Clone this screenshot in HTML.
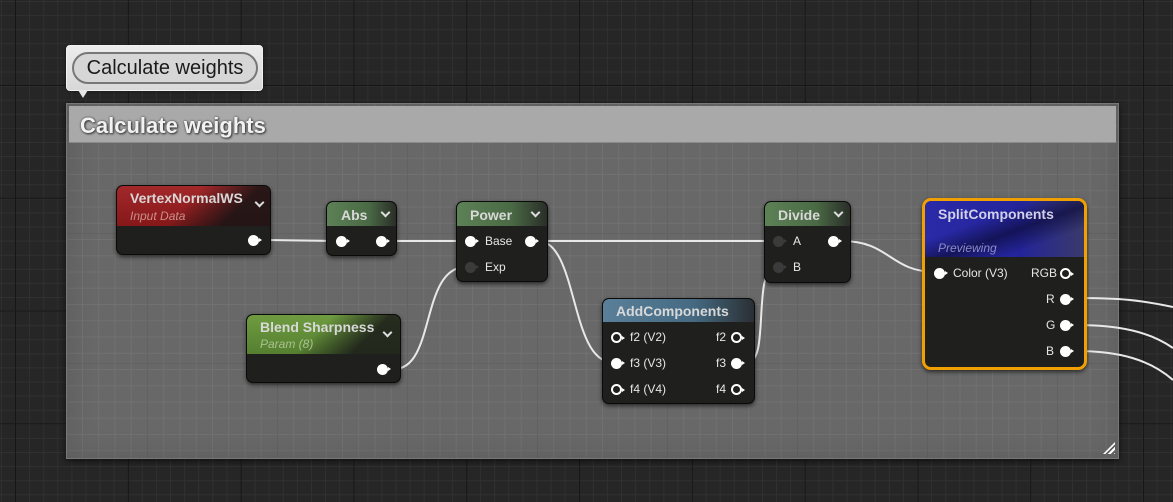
<!DOCTYPE html>
<html><head><meta charset="utf-8"><style>
*{margin:0;padding:0;box-sizing:border-box}
body{width:1173px;height:502px;overflow:hidden;position:relative;font-family:"Liberation Sans",sans-serif;
background-color:#262626;
background-image:
linear-gradient(90deg,#161616 1px,transparent 1px),
linear-gradient(0deg,#161616 1px,transparent 1px),
linear-gradient(90deg,#303030 1px,transparent 1px),
linear-gradient(0deg,#303030 1px,transparent 1px);
background-size:112.8px 112.8px,112.8px 112.8px,14.1px 14.1px,14.1px 14.1px;
background-position:15px 0,0 86px,15px 0,0 2px;}
.comment{position:absolute;left:66px;top:103px;width:1053px;height:356px;background-color:#686868;
background-image:
linear-gradient(90deg,#626262 1px,transparent 1px),
linear-gradient(0deg,#626262 1px,transparent 1px),
linear-gradient(90deg,#717171 1px,transparent 1px),
linear-gradient(0deg,#717171 1px,transparent 1px);
background-size:130px 130px,130px 130px,16.25px 16.25px,16.25px 16.25px;
background-position:80px 0,0 0,15px 0,0 6px;
box-shadow:0 2px 6px rgba(0,0,0,.6), inset 0 0 30px rgba(0,0,0,.12);border:1px solid #777}
.chead{position:absolute;left:2px;top:2px;right:2px;height:37px;background:#a9a9a9;border-bottom:1px solid #8a8a8a}
.chead span{position:absolute;left:11px;top:7px;font-size:22px;font-weight:bold;color:#f2f2f2;text-shadow:1px 1px 2px #333,0 0 2px #444}
.bubble{position:absolute;left:66px;top:45px;width:197px;height:46px;background:linear-gradient(#ececec,#d8d8d8);border-radius:4px;border:1px solid #f2f2f2;box-shadow:0 0 3px rgba(0,0,0,.5)}
.bubble div{position:absolute;left:5px;top:6px;width:186px;height:32px;border:2px solid #777;border-radius:16px;background:#d6d6d6;font-size:20px;color:#1a1a1a;text-align:center;line-height:28px}
.tail{position:absolute;left:78px;top:90px;width:0;height:0;border-left:5px solid transparent;border-right:5px solid transparent;border-top:8px solid #e8e8e8}
.node{position:absolute;background:#1f201e;border:1px solid #0a0a0a;border-radius:7px;box-shadow:0 2px 4px rgba(0,0,0,.6);overflow:hidden}
.hd{position:absolute;left:0;top:0;right:0;border-radius:6px 6px 0 0}
.t{position:absolute;font-size:14px;font-weight:bold;color:#d8d8d8;white-space:nowrap}
.s{position:absolute;font-size:12px;font-style:italic;white-space:nowrap}
.chev{position:absolute;width:7px;height:7px;border-right:2px solid #ddd;border-bottom:2px solid #ddd;transform:rotate(45deg)}
.l{position:absolute;font-size:12px;color:#e6e6e6;white-space:nowrap}
.pin{position:absolute;width:11px;height:11px;border-radius:50%;background:#fff}
.pin::after{content:"";position:absolute;left:11px;top:3px;border-top:2.5px solid transparent;border-bottom:2.5px solid transparent;border-left:3px solid #fff}
.pin.o{background:#1f201e;border:2px solid #fff}
.pin.o::after{left:9px;top:1.5px}
.pin.d{background:#3a3b3a}
.pin.d::after{border-left-color:#3a3b3a}
svg{position:absolute;left:0;top:0}
</style></head><body>
<div class="bubble"><div>Calculate weights</div></div>
<div class="tail"></div>
<div class="comment"><div class="chead"><span>Calculate weights</span></div></div>
<div style="position:absolute;left:1103px;top:442px;width:12px;height:12px;background:repeating-linear-gradient(135deg,#fff 0 2px,transparent 2px 4px);clip-path:polygon(100% 0,100% 100%,0 100%)"></div>

<svg width="1173" height="502" fill="none" stroke="#e8e8e8" stroke-width="2">
<path d="M266,240 L336,241"/>
<path d="M390,241 L466,241"/>
<path d="M538,241 L776,241"/>
<path d="M538,241 C578,241 570,362 612,362"/>
<path d="M394,369 C436,369 420,267 466,267"/>
<path d="M748,362 C770,362 752,267 776,267"/>
<path d="M842,241 C890,241 890,272 936,272"/>
<path d="M1076,298 C1120,298 1140,300 1173,307"/>
<path d="M1076,325 C1120,325 1150,332 1173,348"/>
<path d="M1076,351 C1120,351 1150,360 1173,380"/>
</svg>

<!-- VertexNormalWS -->
<div class="node" style="left:116px;top:185px;width:155px;height:70px">
<div class="hd" style="height:40px;background:linear-gradient(135deg,transparent 45%,rgba(20,20,20,.85) 75%),linear-gradient(#a3282a,#86181a)"></div>
<div class="t" style="left:13px;top:4px">VertexNormalWS</div>
<div class="s" style="left:13px;top:23px;color:#c98e88">Input Data</div>
<div class="chev" style="left:139px;top:13px"></div>
<div class="pin" style="left:131px;top:49px"></div>
</div>
<!-- Abs -->
<div class="node" style="left:326px;top:201px;width:71px;height:55px">
<div class="hd" style="height:24px;background:linear-gradient(90deg,#5d8156,#4a6a45 60%,#2a2e28)"></div>
<div class="t" style="left:14px;top:5px">Abs</div>
<div class="chev" style="left:55px;top:7px"></div>
<div class="pin" style="left:9px;top:34px"></div>
<div class="pin" style="left:49px;top:34px"></div>
</div>
<!-- Power -->
<div class="node" style="left:456px;top:201px;width:92px;height:81px">
<div class="hd" style="height:24px;background:linear-gradient(90deg,#5d8156,#4a6a45 60%,#2a2e28)"></div>
<div class="t" style="left:13px;top:5px">Power</div>
<div class="chev" style="left:75px;top:7px"></div>
<div class="pin" style="left:8px;top:34px"></div><div class="l" style="left:28px;top:32px">Base</div>
<div class="pin" style="left:68px;top:34px"></div>
<div class="pin d" style="left:8px;top:60px"></div><div class="l" style="left:28px;top:58px">Exp</div>
</div>
<!-- Blend Sharpness -->
<div class="node" style="left:246px;top:314px;width:155px;height:69px">
<div class="hd" style="height:39px;background:linear-gradient(135deg,transparent 45%,rgba(25,25,25,.85) 75%),linear-gradient(#6f9c40,#557f30)"></div>
<div class="t" style="left:13px;top:4px">Blend Sharpness</div>
<div class="s" style="left:13px;top:22px;color:#a9c090">Param (8)</div>
<div class="chev" style="left:137px;top:14px"></div>
<div class="pin" style="left:130px;top:49px"></div>
</div>
<!-- AddComponents -->
<div class="node" style="left:602px;top:298px;width:153px;height:106px">
<div class="hd" style="height:23px;background:linear-gradient(90deg,#5a7f99,#456a82 60%,#2a2f33)"></div>
<div class="t" style="left:13px;top:4px">AddComponents</div>
<div class="pin o" style="left:8px;top:33px"></div><div class="l" style="left:27px;top:31px">f2 (V2)</div>
<div class="l" style="left:113px;top:31px">f2</div><div class="pin o" style="left:128px;top:33px"></div>
<div class="pin" style="left:8px;top:59px"></div><div class="l" style="left:27px;top:57px">f3 (V3)</div>
<div class="l" style="left:113px;top:57px">f3</div><div class="pin" style="left:128px;top:59px"></div>
<div class="pin o" style="left:8px;top:85px"></div><div class="l" style="left:27px;top:83px">f4 (V4)</div>
<div class="l" style="left:113px;top:83px">f4</div><div class="pin o" style="left:128px;top:85px"></div>
</div>
<!-- Divide -->
<div class="node" style="left:764px;top:201px;width:87px;height:82px">
<div class="hd" style="height:24px;background:linear-gradient(90deg,#5d8156,#4a6a45 60%,#2a2e28)"></div>
<div class="t" style="left:13px;top:5px">Divide</div>
<div class="chev" style="left:70px;top:7px"></div>
<div class="pin d" style="left:8px;top:34px"></div><div class="l" style="left:28px;top:32px">A</div>
<div class="pin" style="left:63px;top:34px"></div>
<div class="pin d" style="left:8px;top:60px"></div><div class="l" style="left:28px;top:58px">B</div>
</div>
<!-- SplitComponents -->
<div class="node" style="left:922px;top:198px;width:165px;height:172px;border:3px solid #f0a000;border-radius:9px">
<div class="hd" style="height:56px;background:linear-gradient(160deg,transparent 35%,rgba(12,12,60,.7) 55%,transparent 75%),linear-gradient(90deg,#2a2aa8,#24249a 60%,#3a3a6a)"></div>
<div class="t" style="left:13px;top:5px;color:#d0d0e8">SplitComponents</div>
<div class="s" style="left:13px;top:40px;color:#8c8cc8">Previewing</div>
<div class="pin" style="left:9px;top:67px"></div><div class="l" style="left:28px;top:65px">Color (V3)</div>
<div class="l" style="left:106px;top:65px">RGB</div><div class="pin o" style="left:135px;top:67px"></div>
<div class="l" style="left:121px;top:91px">R</div><div class="pin" style="left:135px;top:93px"></div>
<div class="l" style="left:121px;top:117px">G</div><div class="pin" style="left:135px;top:119px"></div>
<div class="l" style="left:121px;top:143px">B</div><div class="pin" style="left:135px;top:145px"></div>
</div>
</body></html>
